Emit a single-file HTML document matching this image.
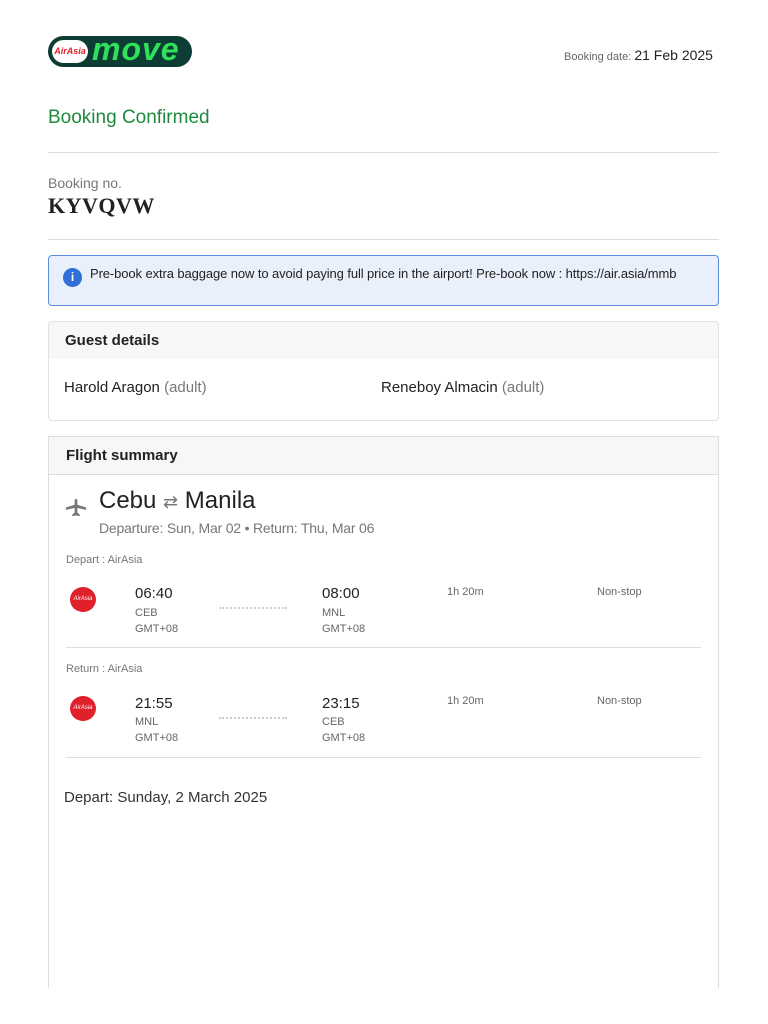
<!DOCTYPE html>
<html><head><meta charset="utf-8"><style>
*{box-sizing:border-box;margin:0;padding:0}
body{width:768px;height:1024px;background:#fff;font-family:"Liberation Sans",sans-serif;color:#222;position:relative;overflow:hidden}
.a{position:absolute;white-space:nowrap}
.hr{position:absolute;left:48px;width:671px;height:1px;background:#ddd}
.g{color:#777}
</style></head><body>
<div class="a" style="left:48px;top:36px;width:144px;height:31px;background:#0c3c34;border-radius:16px"></div>
<div class="a" style="left:52px;top:40px;width:36px;height:23px;background:#fff;border-radius:12px;color:#e0202a;font-style:italic;font-weight:bold;font-size:9px;line-height:23px;text-align:center">AirAsia</div>
<div class="a" style="left:92px;top:31px;color:#2fe05a;font-size:32px;font-weight:bold;font-style:italic;letter-spacing:1px;line-height:36px">move</div>
<div class="a" style="left:564px;top:47px;font-size:11px;color:#666">Booking date: <span style="font-size:14px;color:#222">21 Feb 2025</span></div>
<div class="a" style="left:48px;top:107px;font-size:19px;color:#1e8a3e">Booking Confirmed</div>
<div class="hr" style="top:152px"></div>
<div class="a" style="left:48px;top:175px;font-size:14px;color:#777">Booking no.</div>
<div class="a" style="left:48px;top:193px;font-size:22px;font-weight:bold;font-family:'Liberation Serif',serif;letter-spacing:0.5px">KYVQVW</div>
<div class="hr" style="top:239px"></div>
<div class="a" style="left:48px;top:255px;width:671px;height:51px;background:#e9f0fb;border:1px solid #5b8ee0;border-radius:4px"></div>
<div class="a" style="left:63px;top:268px;width:19px;height:19px;border-radius:50%;background:#2f6fd6;color:#fff;font-size:12px;font-weight:bold;text-align:center;line-height:19px">i</div>
<div class="a" style="left:90px;top:266px;font-size:13px;letter-spacing:-0.1px">Pre-book extra baggage now to avoid paying full price in the airport! Pre-book now : https://air.asia/mmb</div>
<div class="a" style="left:48px;top:321px;width:671px;height:100px;border:1px solid #e2e2e2;border-radius:4px;overflow:hidden">
<div style="height:37px;background:#f7f7f7;padding:10px 16px;font-size:15px;font-weight:bold">Guest details</div></div>
<div class="a" style="left:64px;top:379px;font-size:15px">Harold Aragon <span class="g">(adult)</span></div>
<div class="a" style="left:381px;top:379px;font-size:15px">Reneboy Almacin <span class="g">(adult)</span></div>
<div class="a" style="left:48px;top:436px;width:671px;height:552px;border:1px solid #ddd;border-bottom:none">
<div style="height:38px;background:#f7f7f7;border-bottom:1px solid #ddd;padding:10px 17px;font-size:15px;font-weight:bold">Flight summary</div></div>
<svg class="a" style="left:65px;top:497px" width="22" height="22" viewBox="0 0 24 24"><path fill="#777" d="M1 14v-2.5l9.5-3V4C10.5 3 11.2 2 12 2s1.5 1 1.5 2v4.5l9.5 3V14l-9.5-2v5l2.5 2v2L12 20l-4 1v-2l2.5-2v-5z"/></svg>
<div class="a" style="left:99px;top:487px;font-size:24px">Cebu <span style="color:#777;font-size:18px">⇄</span> Manila</div>
<div class="a" style="left:99px;top:520px;font-size:14px;color:#777;letter-spacing:-0.2px">Departure: Sun, Mar 02 • Return: Thu, Mar 06</div>
<div class="a" style="left:66px;top:554px;font-size:11px;color:#777">Depart : AirAsia</div>
<div class="a" style="left:70px;top:587px;width:26px;height:25px;border-radius:50%;background:#e0202a;color:#fff;font-size:6px;font-style:italic;text-align:center;line-height:25px">AirAsia</div>
<div class="a" style="left:135px;top:585px;font-size:15px">06:40</div>
<div class="a" style="left:135px;top:605px;font-size:11px;color:#666;line-height:16px">CEB<br>GMT+08</div>
<div class="a" style="left:219px;top:607px;width:68px;border-top:2px dotted #ccc"></div>
<div class="a" style="left:322px;top:585px;font-size:15px">08:00</div>
<div class="a" style="left:322px;top:605px;font-size:11px;color:#666;line-height:16px">MNL<br>GMT+08</div>
<div class="a" style="left:447px;top:586px;font-size:11px;color:#666">1h 20m</div>
<div class="a" style="left:597px;top:586px;font-size:11px;color:#666">Non-stop</div>
<div class="a" style="left:66px;top:647px;width:635px;height:1px;background:#ddd"></div>
<div class="a" style="left:66px;top:663px;font-size:11px;color:#777">Return : AirAsia</div>
<div class="a" style="left:70px;top:696px;width:26px;height:25px;border-radius:50%;background:#e0202a;color:#fff;font-size:6px;font-style:italic;text-align:center;line-height:25px">AirAsia</div>
<div class="a" style="left:135px;top:695px;font-size:15px">21:55</div>
<div class="a" style="left:135px;top:714px;font-size:11px;color:#666;line-height:16px">MNL<br>GMT+08</div>
<div class="a" style="left:219px;top:717px;width:68px;border-top:2px dotted #ccc"></div>
<div class="a" style="left:322px;top:695px;font-size:15px">23:15</div>
<div class="a" style="left:322px;top:714px;font-size:11px;color:#666;line-height:16px">CEB<br>GMT+08</div>
<div class="a" style="left:447px;top:695px;font-size:11px;color:#666">1h 20m</div>
<div class="a" style="left:597px;top:695px;font-size:11px;color:#666">Non-stop</div>
<div class="a" style="left:66px;top:757px;width:635px;height:1px;background:#ddd"></div>
<div class="a" style="left:64px;top:789px;font-size:15px;color:#333">Depart: Sunday, 2 March 2025</div>
</body></html>
